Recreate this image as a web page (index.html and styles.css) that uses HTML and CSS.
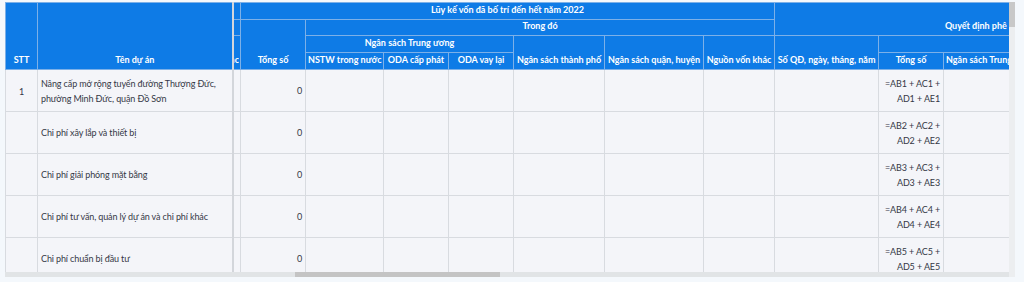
FILE: index.html
```html
<!DOCTYPE html>
<html lang="vi">
<head>
<meta charset="utf-8">
<title>Lũy kế vốn</title>
<link rel="stylesheet" href="styles.css">
</head>
<body>
<div class="frame">
  <div class="main">
    <div class="viewport">
      <table class="grid">
        <colgroup>
          <col class="w-stt"><col class="w-name"><col class="w-peek"><col class="w-65">
          <col class="w-78"><col class="w-65"><col class="w-65"><col class="w-91">
          <col class="w-99"><col class="w-71"><col class="w-104"><col class="w-65">
          <col class="w-90"><col class="w-90"><col class="w-100"><col class="w-last">
        </colgroup>
        <thead>
          <tr class="hr1">
            <th rowspan="4" class="sticky">STT</th>
            <th rowspan="4" class="sticky edge">Tên dự án</th>
            <th class="peek"></th>
            <th colspan="7">Lũy kế vốn đã bố trí đến hết năm 2022</th>
            <th colspan="6" rowspan="2" class="qd">Quyết định phê duyệt chủ trương đầu tư</th>
          </tr>
          <tr class="hr2">
            <th class="peek"></th>
            <th rowspan="3">Tổng số</th>
            <th colspan="6">Trong đó</th>
          </tr>
          <tr class="hr3">
            <th rowspan="2" class="peek"><div class="clip-end"><span>Nguồn vốn khác</span></div></th>
            <th colspan="3">Ngân sách Trung ương</th>
            <th rowspan="2">Ngân sách thành phố</th>
            <th rowspan="2">Ngân sách quận, huyện</th>
            <th rowspan="2">Nguồn vốn khác</th>
            <th rowspan="2">Số QĐ, ngày, tháng, năm</th>
            <th colspan="5">Tổng mức đầu tư</th>
          </tr>
          <tr class="hr4">
            <th>NSTW trong nước</th>
            <th>ODA cấp phát</th>
            <th>ODA vay lại</th>
            <th>Tổng số</th>
            <th>Ngân sách Trung ương</th>
            <th>Ngân sách thành phố</th>
            <th>Ngân sách quận, huyện</th>
            <th>Nguồn vốn khác</th>
          </tr>
        </thead>
        <tbody>
          <tr>
            <td class="stt">1</td>
            <td class="name edge">Nâng cấp mở rộng tuyến đường Thượng Đức, phường Minh Đức, quận Đồ Sơn</td>
            <td class="peek"></td><td class="num">0</td><td></td><td></td><td></td><td></td><td></td><td></td><td></td>
            <td class="num">=AB1 + AC1 + AD1 + AE1</td><td></td><td></td><td></td><td></td>
          </tr>
          <tr>
            <td class="stt"></td>
            <td class="name edge">Chi phí xây lắp và thiết bị</td>
            <td class="peek"></td><td class="num">0</td><td></td><td></td><td></td><td></td><td></td><td></td><td></td>
            <td class="num">=AB2 + AC2 + AD2 + AE2</td><td></td><td></td><td></td><td></td>
          </tr>
          <tr>
            <td class="stt"></td>
            <td class="name edge">Chi phí giải phóng mặt bằng</td>
            <td class="peek"></td><td class="num">0</td><td></td><td></td><td></td><td></td><td></td><td></td><td></td>
            <td class="num">=AB3 + AC3 + AD3 + AE3</td><td></td><td></td><td></td><td></td>
          </tr>
          <tr>
            <td class="stt"></td>
            <td class="name edge">Chi phí tư vấn, quản lý dự án và chi phí khác</td>
            <td class="peek"></td><td class="num">0</td><td></td><td></td><td></td><td></td><td></td><td></td><td></td>
            <td class="num">=AB4 + AC4 + AD4 + AE4</td><td></td><td></td><td></td><td></td>
          </tr>
          <tr>
            <td class="stt"></td>
            <td class="name edge">Chi phí chuẩn bị đầu tư</td>
            <td class="peek"></td><td class="num">0</td><td></td><td></td><td></td><td></td><td></td><td></td><td></td>
            <td class="num">=AB5 + AC5 + AD5 + AE5</td><td></td><td></td><td></td><td></td>
          </tr>
        </tbody>
      </table>
    </div>
    <div class="hscroll"><div class="hthumb"></div></div>
  </div>
  <div class="vscroll"><div class="vthumb"></div></div>
</div>
</body>
</html>
```
FILE: styles.css
```css
* { box-sizing: border-box; }
html, body { margin: 0; padding: 0; }
body {
  background: #f4f8fc;
  font-family: Lato, "Noto Sans", sans-serif;
}
.frame {
  display: flex;
  align-items: flex-start;
  margin: 2px 0 0 5px;
  width: 1010px;
}
.main {
  flex: 0 0 1004px;
  width: 1004px;
  min-width: 0;
  overflow: hidden;
}
.viewport {
  width: 1004px;
  height: 270px;
  overflow: hidden;
  background: #f4f5f9;
}
.grid {
  border-collapse: collapse;
  table-layout: fixed;
  width: 1272px;
}
.w-stt { width: 32px; }
.w-name { width: 195px; }
.w-peek { width: 8px; }
.w-65 { width: 65px; }
.w-78 { width: 78px; }
.w-91 { width: 91px; }
.w-99 { width: 99px; }
.w-71 { width: 71px; }
.w-104 { width: 104px; }
.w-90 { width: 90px; }
.w-100 { width: 100px; }
.w-last { width: 54px; }

.grid th {
  background: #0e7be6;
  color: #fff;
  font-weight: 700;
  font-size: 9px;
  line-height: 12px;
  border: 1px solid #7cb0e8;
  text-align: center;
  vertical-align: bottom;
  padding: 0 2px 3px;
  white-space: nowrap;
  overflow: hidden;
}
.hr1 { height: 17px; }
.hr2 { height: 16px; }
.hr3 { height: 17px; }
.hr4 { height: 17px; }
.grid .edge { border-right: 2px solid #d3d6db; }
.grid .peek { padding-left: 0; padding-right: 1px; }
.clip-end {
  display: flex;
  justify-content: flex-end;
  overflow: hidden;
}
.clip-end span { flex: none; }

.grid td {
  height: 42px;
  border: 1px solid #d8dbe0;
  font-size: 9px;
  letter-spacing: -0.12px;
  line-height: 15px;
  color: #353846;
  padding: 0 4px;
  vertical-align: middle;
}
.grid td.stt { text-align: center; padding-top: 2px; }
.grid td.name { text-align: left; padding-left: 3px; }
.grid td.num { text-align: right; padding: 0 3px; }

.hscroll {
  display: flex;
  height: 5px;
  background: #e1e4e6;
}
.hthumb {
  margin-left: 290px;
  width: 205px;
  background: #c4c4c4;
}
.vscroll {
  flex: 0 0 6px;
  width: 6px;
  height: 275px;
  background: #eceef0;
}
.vthumb {
  height: 25px;
  background: #c8c8c8;
}
```
